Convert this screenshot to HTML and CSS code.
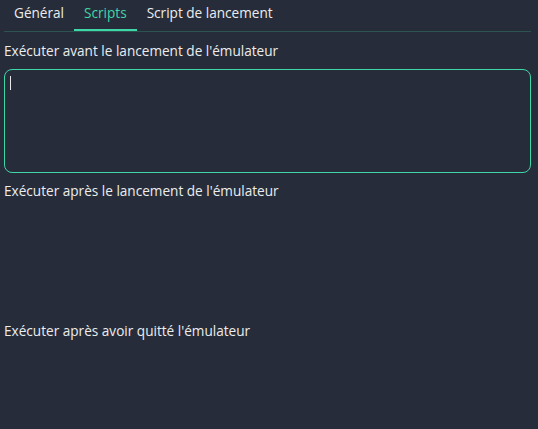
FILE: index.html
```html
<!DOCTYPE html>
<html lang="fr">
<head>
<meta charset="utf-8">
<link rel="stylesheet" href="styles.css">
</head>
<body>
<div class="page">
  <nav class="tabs">
    <div class="tab">Général</div>
    <div class="tab active">Scripts</div>
    <div class="tab">Script de lancement</div>
  </nav>
  <section class="field">
    <label class="label">Exécuter avant le lancement de l'émulateur</label>
    <div class="editor focused"><span class="caret"></span></div>
  </section>
  <section class="field">
    <label class="label">Exécuter après le lancement de l'émulateur</label>
    <div class="editor"></div>
  </section>
  <section class="field">
    <label class="label">Exécuter après avoir quitté l'émulateur</label>
    <div class="editor"></div>
  </section>
</div>
</body>
</html>
```
FILE: styles.css
```css
html, body {
  margin: 0;
  padding: 0;
  background: #262c39;
}
body {
  font-family: "Open Sans", "DejaVu Sans", sans-serif;
  font-size: 13.6px;
  color: #ececee;
  overflow: hidden;
  height: 429px;
}
.page {
  padding: 0 7px 0 4px;
}
.tabs {
  display: flex;
  border-bottom: 1px solid #2c5350;
  height: 32px;
  box-sizing: border-box;
}
.tab {
  padding: 4px 10px 0;
  line-height: 18px;
  box-sizing: border-box;
  height: 31px;
  border-bottom: 2px solid transparent;
  margin-bottom: -1px;
}
.tab.active {
  color: #3fd7a8;
  border-bottom-color: #3fd7a8;
}
.field {
  display: flex;
  flex-direction: column;
}
.label {
  display: block;
  line-height: 18px;
  margin-top: 10px;
  margin-bottom: 9px;
}
.field + .field .label {
  margin-top: 9px;
}
.editor {
  height: 104px;
  box-sizing: border-box;
  border: 1px solid transparent;
  border-radius: 8px;
  padding: 6px 5px;
}
.editor.focused {
  border-color: #3fd7a8;
}
.caret {
  display: block;
  width: 1px;
  height: 14px;
  background: #e8e8ea;
}
```
